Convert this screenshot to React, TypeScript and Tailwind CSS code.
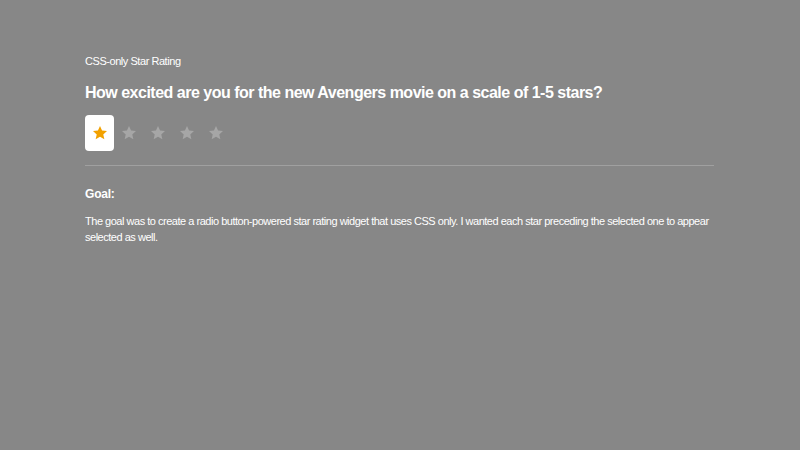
import React from "react";

const Star = ({ color }: { color: string }) => (
  <svg width="16" height="16" viewBox="0 0 24 24" aria-hidden="true">
    <path
      fill={color}
      d="M12 1.5l3.09 6.9 7.41.72-5.6 4.98 1.64 7.4L12 17.6l-6.54 3.9 1.64-7.4L1.5 9.12l7.41-.72z"
    />
  </svg>
);

export default function App() {
  return (
    <div
      className="w-[800px] h-[450px] bg-[#878787] text-white"
      style={{ fontFamily: '"Liberation Sans", Arial, sans-serif' }}
    >
      <div className="pl-[85px] pt-[54px]">
        <div className="w-[629px]">
          <p className="text-[11px] leading-[14px] tracking-[-0.45px]">CSS-only Star Rating</p>
          <h1 className="mt-[15px] text-[16px] leading-[20px] font-bold tracking-[-0.5px]">
            How excited are you for the new Avengers movie on a scale of 1-5 stars?
          </h1>
          <div className="mt-[12px] flex items-center">
            <div className="w-[29px] h-[36px] bg-white rounded-[4px] flex items-center justify-center">
              <Star color="#f2a100" />
            </div>
            {[0, 1, 2, 3].map((i) => (
              <div key={i} className="w-[29px] h-[36px] flex items-center justify-center">
                <Star color="#a6a6a6" />
              </div>
            ))}
          </div>
          <div className="mt-[14px] h-px bg-[#a0a0a0]" />
          <h2 className="mt-[20px] text-[12px] leading-[16px] font-bold tracking-[-0.2px]">Goal:</h2>
          <p className="mt-[11px] text-[11px] leading-[16px] tracking-[-0.48px]">
            The goal was to create a radio button-powered star rating widget that uses CSS only. I wanted each star preceding the selected one to appear selected as well.
          </p>
        </div>
      </div>
    </div>
  );
}
